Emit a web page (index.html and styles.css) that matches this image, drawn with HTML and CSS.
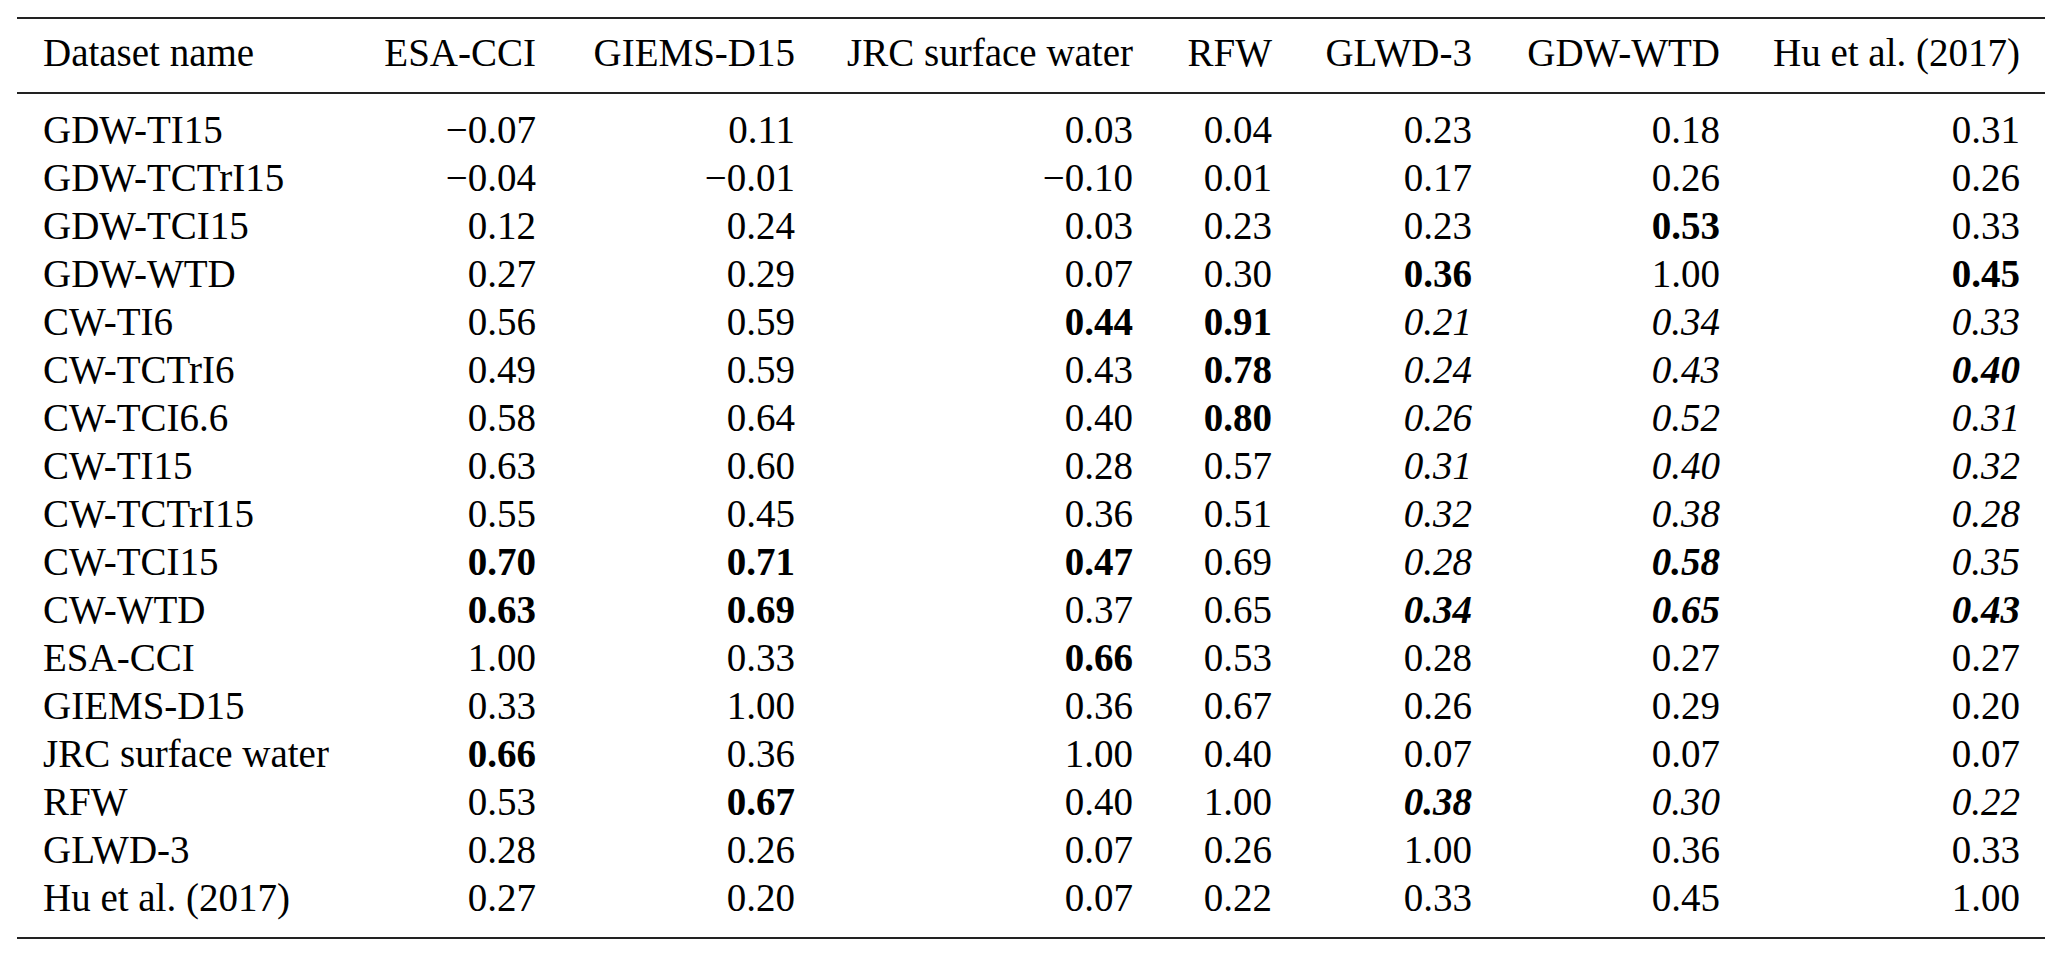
FILE: index.html
```html
<!DOCTYPE html>
<html>
<head>
<meta charset="utf-8">
<link rel="stylesheet" href="styles.css">
</head>
<body>
<table class="tbl">
<colgroup>
<col class="c0"><col class="c1"><col class="c2"><col class="c3"><col class="c4"><col class="c5"><col class="c6"><col class="c7">
</colgroup>
<thead>
<tr><th class="name">Dataset name</th><th>ESA-CCI</th><th>GIEMS-D15</th><th>JRC surface water</th><th>RFW</th><th>GLWD-3</th><th>GDW-WTD</th><th>Hu et al. (2017)</th></tr>
</thead>
<tbody>
<tr><td class="name">GDW-TI15</td><td>−0.07</td><td>0.11</td><td>0.03</td><td>0.04</td><td>0.23</td><td>0.18</td><td>0.31</td></tr>
<tr><td class="name">GDW-TCTrI15</td><td>−0.04</td><td>−0.01</td><td>−0.10</td><td>0.01</td><td>0.17</td><td>0.26</td><td>0.26</td></tr>
<tr><td class="name">GDW-TCI15</td><td>0.12</td><td>0.24</td><td>0.03</td><td>0.23</td><td>0.23</td><td class="b">0.53</td><td>0.33</td></tr>
<tr><td class="name">GDW-WTD</td><td>0.27</td><td>0.29</td><td>0.07</td><td>0.30</td><td class="b">0.36</td><td>1.00</td><td class="b">0.45</td></tr>
<tr><td class="name">CW-TI6</td><td>0.56</td><td>0.59</td><td class="b">0.44</td><td class="b">0.91</td><td class="i">0.21</td><td class="i">0.34</td><td class="i">0.33</td></tr>
<tr><td class="name">CW-TCTrI6</td><td>0.49</td><td>0.59</td><td>0.43</td><td class="b">0.78</td><td class="i">0.24</td><td class="i">0.43</td><td class="bi">0.40</td></tr>
<tr><td class="name">CW-TCI6.6</td><td>0.58</td><td>0.64</td><td>0.40</td><td class="b">0.80</td><td class="i">0.26</td><td class="i">0.52</td><td class="i">0.31</td></tr>
<tr><td class="name">CW-TI15</td><td>0.63</td><td>0.60</td><td>0.28</td><td>0.57</td><td class="i">0.31</td><td class="i">0.40</td><td class="i">0.32</td></tr>
<tr><td class="name">CW-TCTrI15</td><td>0.55</td><td>0.45</td><td>0.36</td><td>0.51</td><td class="i">0.32</td><td class="i">0.38</td><td class="i">0.28</td></tr>
<tr><td class="name">CW-TCI15</td><td class="b">0.70</td><td class="b">0.71</td><td class="b">0.47</td><td>0.69</td><td class="i">0.28</td><td class="bi">0.58</td><td class="i">0.35</td></tr>
<tr><td class="name">CW-WTD</td><td class="b">0.63</td><td class="b">0.69</td><td>0.37</td><td>0.65</td><td class="bi">0.34</td><td class="bi">0.65</td><td class="bi">0.43</td></tr>
<tr><td class="name">ESA-CCI</td><td>1.00</td><td>0.33</td><td class="b">0.66</td><td>0.53</td><td>0.28</td><td>0.27</td><td>0.27</td></tr>
<tr><td class="name">GIEMS-D15</td><td>0.33</td><td>1.00</td><td>0.36</td><td>0.67</td><td>0.26</td><td>0.29</td><td>0.20</td></tr>
<tr><td class="name">JRC surface water</td><td class="b">0.66</td><td>0.36</td><td>1.00</td><td>0.40</td><td>0.07</td><td>0.07</td><td>0.07</td></tr>
<tr><td class="name">RFW</td><td>0.53</td><td class="b">0.67</td><td>0.40</td><td>1.00</td><td class="bi">0.38</td><td class="i">0.30</td><td class="i">0.22</td></tr>
<tr><td class="name">GLWD-3</td><td>0.28</td><td>0.26</td><td>0.07</td><td>0.26</td><td>1.00</td><td>0.36</td><td>0.33</td></tr>
<tr><td class="name">Hu et al. (2017)</td><td>0.27</td><td>0.20</td><td>0.07</td><td>0.22</td><td>0.33</td><td>0.45</td><td>1.00</td></tr>
</tbody>
</table>
</body>
</html>
```

FILE: styles.css
```css
html, body {
  margin: 0;
  padding: 0;
  background: #ffffff;
}

.tbl {
  margin: 17px 0 0 17px;
  width: 2028px;
  table-layout: fixed;
  border-collapse: collapse;
  font-family: "Liberation Serif", "Times New Roman", serif;
  font-size: 39px;
  line-height: 48px;
  color: #000000;
  border-top: 2px solid #222222;
  border-bottom: 2px solid #222222;
}

.c0 { width: 339px; }
.c1 { width: 180px; }
.c2 { width: 259px; }
.c3 { width: 338px; }
.c4 { width: 139px; }
.c5 { width: 200px; }
.c6 { width: 248px; }
.c7 { width: 325px; }

.tbl th,
.tbl td {
  padding: 0;
  text-align: right;
  font-weight: normal;
  white-space: nowrap;
  vertical-align: baseline;
}

.tbl th {
  padding-top: 10px;
  padding-bottom: 15px;
  border-bottom: 2px solid #222222;
}

.tbl .name {
  text-align: left;
  padding-left: 26px;
}

.tbl th:last-child,
.tbl td:last-child {
  padding-right: 25px;
}

.tbl tbody tr:first-child td {
  padding-top: 12px;
}

.tbl tbody tr:last-child td {
  padding-bottom: 15px;
}

.tbl .b { font-weight: bold; }
.tbl .i { font-style: italic; }
.tbl .bi { font-weight: bold; font-style: italic; }
```
